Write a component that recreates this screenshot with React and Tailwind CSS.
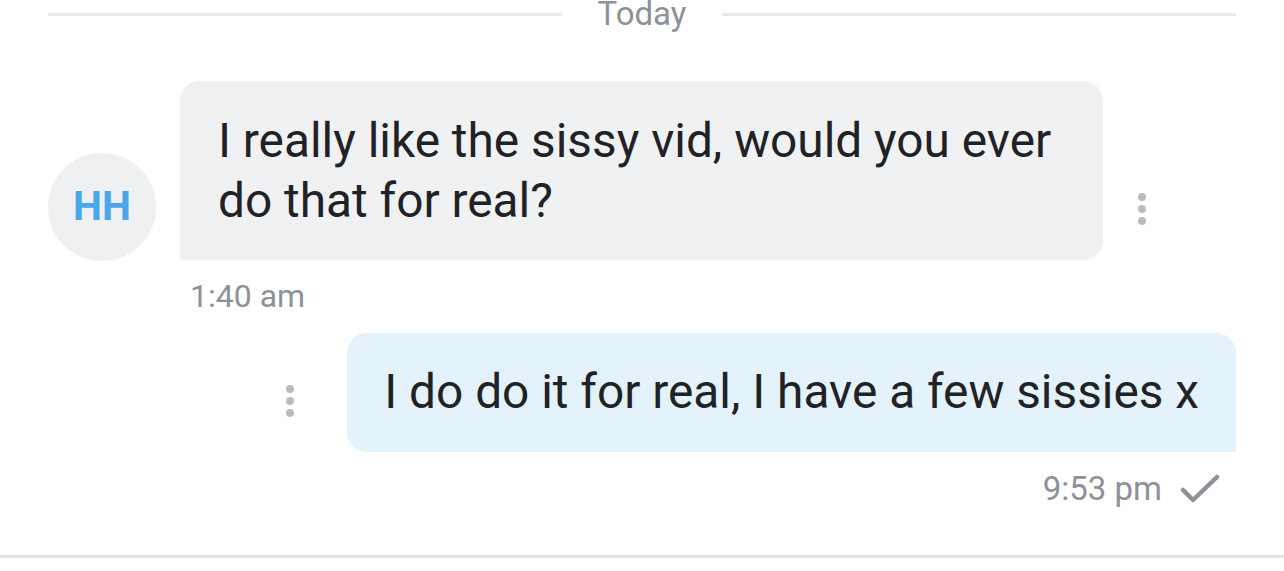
import React from 'react'

function Dots() {
  return (
    <div className="flex flex-col items-center gap-[4px]">
      <span className="block h-[8px] w-[8px] rounded-full bg-[#b9bbc1]" />
      <span className="block h-[8px] w-[8px] rounded-full bg-[#b9bbc1]" />
      <span className="block h-[8px] w-[8px] rounded-full bg-[#b9bbc1]" />
    </div>
  )
}

export default function App() {
  return (
    <main className="relative h-[571px] w-[1284px] overflow-hidden bg-white font-['Roboto',sans-serif]">
      <div className="px-[48px]">
        {/* separateur date */}
        <div className="-mt-[12px] flex items-center">
          <div className="h-[3px] flex-1 bg-[#e8e9ec]" />
          <span className="px-[36px] text-[33px] leading-[52px] text-[#8e9199]">Today</span>
          <div className="h-[3px] flex-1 bg-[#e8e9ec]" />
        </div>

        {/* message recu */}
        <div className="mt-[41px] flex items-end">
          <div className="mb-[-1px] flex h-[108px] w-[108px] shrink-0 items-center justify-center rounded-full bg-[#eff0f2]">
            <span className="text-[41px] font-bold text-[#4aa8e8]">HH</span>
          </div>
          <div className="ml-[24px] w-[923px] rounded-[20px] rounded-bl-none bg-[#f0f1f3] pl-[38px] pr-[30px] pt-[30px] pb-[29px] text-[47.8px] leading-[60px] text-[#212226]">
            I really like the sissy vid, would you ever do that for real?
          </div>
          <div className="mb-[35px] flex w-[78px] justify-center">
            <Dots />
          </div>
        </div>
        <div className="ml-[142px] mt-[18px] text-[32px] leading-[36px] text-[#8e9199]">1:40 am</div>

        {/* message envoye */}
        <div className="mt-[19px] flex items-center justify-end">
          <div className="mr-[53px] mt-[16px]">
            <Dots />
          </div>
          <div className="rounded-[20px] rounded-br-none bg-[#e3f2fb] pl-[37px] pr-[37px] pt-[29px] pb-[30px] text-[47.8px] leading-[60px] text-[#212226]">
            I do do it for real, I have a few sissies x
          </div>
        </div>
        <div className="mt-[19px] flex items-center justify-end pr-[16px]">
          <span className="text-[33px] leading-[36px] text-[#8e9199]">9:53 pm</span>
          <svg className="ml-[18px]" width="40" height="30" viewBox="0 0 40 30" fill="none">
            <path d="M3 16 L13 26 L37 3" stroke="#8e9199" strokeWidth="4.5" strokeLinecap="round" strokeLinejoin="round" />
          </svg>
        </div>
      </div>
      <div className="absolute left-0 right-0 top-[555px] h-[3px] bg-[#e4e4e4]" />
    </main>
  )
}
